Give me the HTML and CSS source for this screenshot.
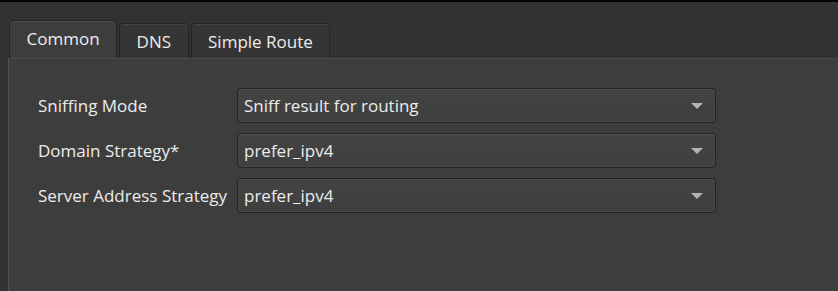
FILE: index.html
```html
<!DOCTYPE html>
<html>
<head>
<meta charset="utf-8">
<link rel="stylesheet" href="styles.css">
</head>
<body>
<div class="window">
  <div class="tabbar">
    <div class="tab selected">Common</div>
    <div class="tab">DNS</div>
    <div class="tab">Simple Route</div>
  </div>
  <div class="pane">
    <div class="form">
      <div class="label">Sniffing Mode</div>
      <div class="combo"><span>Sniff result for routing</span><i class="arrow"></i></div>
      <div class="label">Domain Strategy*</div>
      <div class="combo"><span>prefer_ipv4</span><i class="arrow"></i></div>
      <div class="label">Server Address Strategy</div>
      <div class="combo"><span>prefer_ipv4</span><i class="arrow"></i></div>
    </div>
  </div>
</div>
</body>
</html>
```
FILE: styles.css
```css
html, body {
  margin: 0;
  padding: 0;
  background: #323232;
  width: 838px;
  height: 291px;
  overflow: hidden;
}
.window {
  border-top: 2px solid #050505;
  height: 289px;
  display: flex;
  flex-direction: column;
  font-family: "Open Sans", "Noto Sans", sans-serif;
  font-size: 17px;
  color: #ececec;
}
.tabbar {
  display: flex;
  align-items: flex-end;
  padding: 0 0 0 9px;
  height: 56px;
  flex: none;
  box-sizing: border-box;
  gap: 2px;
}
.tab {
  box-sizing: border-box;
  height: 35px;
  padding: 0 16.5px;
  display: flex;
  align-items: center;
  background: #353535;
  border: 1px solid #252525;
  border-bottom: none;
  border-radius: 4px 4px 0 0;
  box-shadow: inset 0 1px 0 #444;
}
.tab.selected {
  height: 38px;
  background: #3d3d3d;
  padding: 0 16.5px 3px;
  box-shadow: inset 0 1px 0 #4a4a4a;
}
.pane {
  flex: 1;
  margin-left: 8px;
  background: #3d3d3d;
  border-top: 1px solid #4b4b4b;
  border-left: 1px solid #4f4f4f;
}
.form {
  display: grid;
  grid-template-columns: 199px 479px;
  row-gap: 10px;
  align-items: center;
  padding: 29px 0 0 29px;
}
.label {
  white-space: nowrap;
}
.combo {
  box-sizing: border-box;
  height: 35px;
  display: flex;
  align-items: center;
  justify-content: space-between;
  padding: 0 12px 0 6px;
  background: linear-gradient(#434343, #3f3f3f);
  border: 1px solid #242424;
  border-radius: 3px;
  box-shadow: inset 0 1px 0 #4d4d4d, inset 1px 0 0 #474747, inset -1px 0 0 #474747, inset 0 -1px 0 #474747;
}
.arrow {
  width: 0;
  height: 0;
  border-left: 6px solid transparent;
  border-right: 6px solid transparent;
  border-top: 6px solid #b4b4b4;
}
```
